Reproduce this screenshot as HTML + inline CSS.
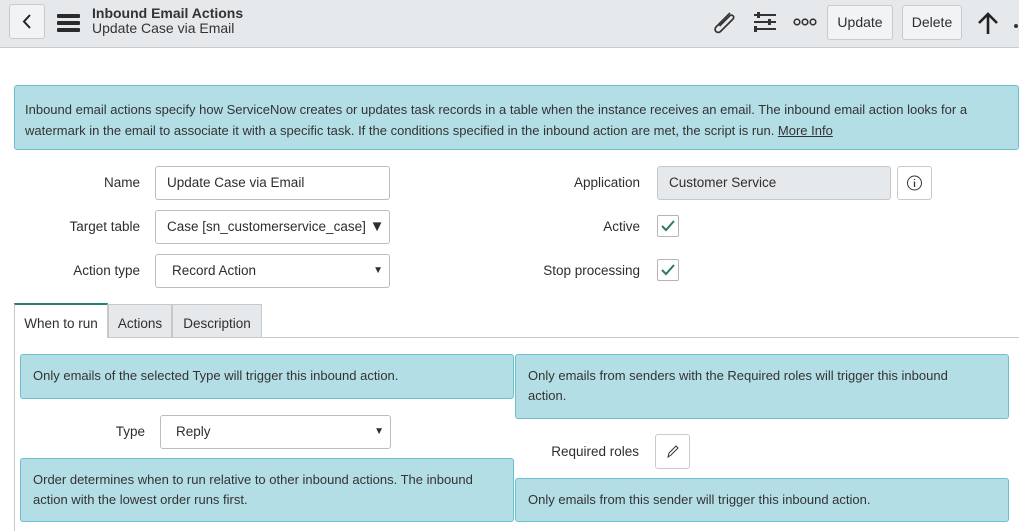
<!DOCTYPE html>
<html><head><style>
*{box-sizing:border-box;margin:0;padding:0}
body{width:1019px;height:531px;overflow:hidden;background:#fff;font-family:"Liberation Sans",sans-serif;font-size:13px;color:#2e2e2e;position:relative}
.a{position:absolute}
.hdr{left:0;top:0;width:1019px;height:48px;background:#e6e9eb;border-bottom:1px solid #c9cbcd}
.btn{background:#f2f3f5;border:1px solid #c8cacc;border-radius:3px;text-align:center}
.info{background:#b4dee5;border:1px solid #6bc1cf;border-radius:3px;color:#333;font-size:13px;line-height:20px}
.lbl{text-align:right;font-size:13.5px}
.inp{border:1px solid #bdbdbd;border-radius:3px;background:#fff;height:34px;line-height:32px;padding-left:11px;font-size:13.5px}
.chk{width:22px;height:22px;border:1px solid #b5b5b5;border-radius:2px;background:#fff}
</style></head><body>
<div class="a hdr"></div>
<div class="a btn" style="left:9px;top:4px;width:36px;height:35px"><svg width="34" height="33" viewBox="0 0 34 33"><path d="M20 10 L14 16.5 L20 23" stroke="#222" stroke-width="2" fill="none"/></svg></div>
<div class="a" style="left:57px;top:14px;width:23px;height:4px;background:#2b2b2b;border-radius:1px"></div>
<div class="a" style="left:57px;top:21px;width:23px;height:4px;background:#2b2b2b;border-radius:1px"></div>
<div class="a" style="left:57px;top:28px;width:23px;height:4px;background:#2b2b2b;border-radius:1px"></div>
<div class="a" style="left:92px;top:5px;font-size:14px;font-weight:bold;color:#333">Inbound Email Actions</div>
<div class="a" style="left:92px;top:20px;font-size:14px;color:#333">Update Case via Email</div>
<svg class="a" style="left:710px;top:8px" width="28" height="28" viewBox="0 0 28 28"><path d="M20 5 L6 19 a3 3 0 0 0 4.5 4.5 L23 11 a2.2 2.2 0 0 0 -3.2 -3.2 L9.5 18" stroke="#333" stroke-width="1.7" fill="none"/></svg>
<svg class="a" style="left:752px;top:10px" width="26" height="26" viewBox="0 0 26 26"><path d="M2 5H24M2 12H24M2 19H24" stroke="#333" stroke-width="2"/><rect x="5" y="2" width="3" height="6" fill="#333"/><rect x="16" y="9" width="3" height="6" fill="#333"/><rect x="2" y="16" width="3" height="6" fill="#333"/></svg>
<svg class="a" style="left:793px;top:17px" width="26" height="10" viewBox="0 0 26 10"><circle cx="4" cy="5" r="2.8" stroke="#333" stroke-width="1.6" fill="none"/><circle cx="12" cy="5" r="2.8" stroke="#333" stroke-width="1.6" fill="none"/><circle cx="20" cy="5" r="2.8" stroke="#333" stroke-width="1.6" fill="none"/></svg>
<div class="a btn" style="left:827px;top:5px;width:66px;height:35px;line-height:33px;font-size:14px">Update</div>
<div class="a btn" style="left:902px;top:5px;width:60px;height:35px;line-height:33px;font-size:14px">Delete</div>
<svg class="a" style="left:975px;top:10px" width="26" height="26" viewBox="0 0 26 26"><path d="M13 24V4M4 13L13 4L22 13" stroke="#222" stroke-width="2.6" fill="none"/></svg>
<div class="a" style="left:1014px;top:24px;width:4px;height:4px;background:#333;border-radius:2px"></div>

<div class="a info" style="left:14px;top:85px;width:1005px;height:65px;padding:13px 10px;line-height:21px">Inbound email actions specify how ServiceNow creates or updates task records in a table when the instance receives an email. The inbound email action looks for a watermark in the email to associate it with a specific task. If the conditions specified in the inbound action are met, the script is run. <u>More Info</u></div>

<div class="a lbl" style="left:20px;top:175px;width:120px">Name</div>
<div class="a inp" style="left:155px;top:166px;width:235px">Update Case via Email</div>
<div class="a lbl" style="left:20px;top:219px;width:120px">Target table</div>
<div class="a inp" style="left:155px;top:210px;width:235px">Case [sn_customerservice_case] <span style="font-size:15px">▼</span></div>
<div class="a lbl" style="left:20px;top:263px;width:120px">Action type</div>
<div class="a inp" style="left:155px;top:254px;width:235px;padding-left:16px">Record Action<span style="position:absolute;right:6px;font-size:10px">▼</span></div>

<div class="a lbl" style="left:480px;top:175px;width:160px">Application</div>
<div class="a inp" style="left:657px;top:166px;width:234px;background:#e6e9eb;border-color:#c5c7c9">Customer Service</div>
<div class="a btn" style="left:897px;top:166px;width:35px;height:34px;background:#fff"><svg width="33" height="32" viewBox="0 0 33 32"><circle cx="16.5" cy="16" r="7" stroke="#333" stroke-width="1" fill="none"/><path d="M16.5 14.5V20M16.5 12V13" stroke="#333" stroke-width="1.3"/></svg></div>
<div class="a lbl" style="left:480px;top:219px;width:160px">Active</div>
<div class="a chk" style="left:657px;top:215px"><svg width="20" height="20"><path d="M4 10L8 14L16 5" stroke="#2a7a6a" stroke-width="2" fill="none"/></svg></div>
<div class="a lbl" style="left:480px;top:263px;width:160px">Stop processing</div>
<div class="a chk" style="left:657px;top:259px"><svg width="20" height="20"><path d="M4 10L8 14L16 5" stroke="#2a7a6a" stroke-width="2" fill="none"/></svg></div>

<div class="a" style="left:14px;top:337px;width:1005px;height:194px;border-left:1px solid #c8c8c8;border-top:1px solid #c8c8c8"></div>
<div class="a" style="left:14px;top:303px;width:94px;height:35px;background:#fff;border:1px solid #c8c8c8;border-top:2px solid #1f8476;border-bottom:none;line-height:37px;text-align:center;font-size:13.5px">When to run</div>
<div class="a" style="left:108px;top:304px;width:64px;height:33px;background:#e6e9eb;border:1px solid #c8c8c8;border-bottom:none;line-height:37px;text-align:center;font-size:13.5px">Actions</div>
<div class="a" style="left:172px;top:304px;width:90px;height:33px;background:#e6e9eb;border:1px solid #c8c8c8;border-bottom:none;line-height:37px;text-align:center;font-size:13.5px">Description</div>

<div class="a info" style="left:20px;top:354px;width:494px;height:45px;padding:11px 12px">Only emails of the selected Type will trigger this inbound action.</div>
<div class="a info" style="left:515px;top:354px;width:494px;height:65px;padding:11px 40px 11px 12px">Only emails from senders with the Required roles will trigger this inbound action.</div>
<div class="a lbl" style="left:20px;top:424px;width:125px">Type</div>
<div class="a inp" style="left:160px;top:415px;width:231px;padding-left:15px">Reply<span style="position:absolute;right:6px;font-size:10px">▼</span></div>
<div class="a lbl" style="left:500px;top:444px;width:139px">Required roles</div>
<div class="a btn" style="left:655px;top:434px;width:35px;height:35px;background:#fff"><svg width="33" height="33" viewBox="0 0 33 33"><path d="M12 22L13 18L20 11L22 13L15 20Z" stroke="#333" stroke-width="1" fill="none"/></svg></div>
<div class="a info" style="left:20px;top:458px;width:494px;height:64px;padding:11px 12px">Order determines when to run relative to other inbound actions. The inbound action with the lowest order runs first.</div>
<div class="a info" style="left:515px;top:478px;width:494px;height:44px;padding:11px 12px">Only emails from this sender will trigger this inbound action.</div>
</body></html>
